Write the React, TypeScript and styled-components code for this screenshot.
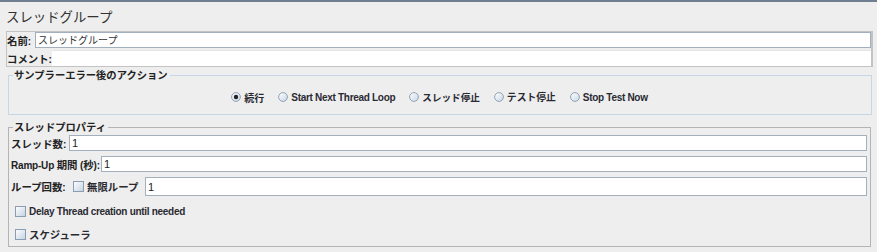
import React from 'react';
import styled, { createGlobalStyle } from 'styled-components';

const GlobalStyle = createGlobalStyle`
  html, body { margin: 0; padding: 0; background: #eeeeee; }
  body { width: 877px; height: 252px; overflow: hidden; }
`;

const FONT = `"Liberation Sans", "Noto Sans CJK JP", sans-serif`;
const JA = `"Noto Sans CJK JP", sans-serif`;

//region:Styled Components
const Page = styled.div`
  box-sizing: border-box;
  width: 877px;
  height: 252px;
  border-top: 2px solid #6f7f90;
  padding: 0 4px 0 6px;
  font-family: ${FONT};
  color: #222;
`;
const Title = styled.div`
  font-family: ${JA};
  font-size: 13.4px;
  line-height: 29px;
  color: #333;
`;
const NameBox = styled.div`
  box-sizing: border-box;
  border: 1px solid #c3c3c3;
  border-right-width: 2px;
  display: flex;
  flex-direction: column;
`;
const Row = styled.div<{ $h?: number; $indent?: number }>`
  display: flex;
  align-items: center;
  height: ${p => p.$h ?? 16}px;
  padding-left: ${p => p.$indent ?? 0}px;
`;
const Label = styled.span<{ $w: number }>`
  box-sizing: border-box;
  width: ${p => p.$w}px;
  flex: none;
  font-weight: bold;
  font-size: 10px;
  letter-spacing: -0.2px;
  white-space: nowrap;
  color: #222;
`;
const Ja = styled.span<{ $size?: number }>`
  font-family: ${JA};
  font-size: ${p => p.$size ?? 10.4}px;
  letter-spacing: 0;
`;
const Field = styled.div<{ $flat?: boolean }>`
  flex: 1;
  box-sizing: border-box;
  height: 100%;
  background: #fff;
  border: 1px solid ${p => (p.$flat ? '#ffffff' : '#a2afbc')};
  border-top: 1px solid ${p => (p.$flat ? '#e4e4e4' : '#a2afbc')};
  font-size: 11px;
  line-height: 14px;
  padding-left: 2px;
  color: #222;
  display: flex;
  align-items: center;
  white-space: nowrap;
`;
const FieldText = styled.span`
  font-family: ${JA};
  font-size: 10px;
  color: #333;
`;
const Group = styled.fieldset<{ $blue?: boolean; $right?: number }>`
  margin: 0 ${p => p.$right ?? 1}px 0 2px;
  padding: 0 3px 0 2px;
  border: 1px solid ${p => (p.$blue ? '#c6d6e6' : '#b4b4b4')};
  min-width: 0;
`;
const Legend = styled.legend`
  font-family: ${JA};
  font-size: 10.3px;
  font-weight: bold;
  line-height: 14px;
  padding: 0 2px 0 1px;
  margin-left: 2px;
  color: #222;
`;
const RadioRow = styled.div`
  display: flex;
  justify-content: center;
  align-items: center;
  gap: 14px;
  height: 16px;
  margin: 7px 0 9px;
`;
const Choice = styled.label`
  display: flex;
  align-items: center;
  gap: 3px;
  font-size: 10px;
  letter-spacing: -0.3px;
  font-weight: bold;
  white-space: nowrap;
  color: #2a2a33;
`;
const Stack = styled.div`
  display: flex;
  flex-direction: column;
  padding: 1px 0 3px;
`;
const Gap = styled.div<{ $h: number }>`
  height: ${p => p.$h}px;
  flex: none;
`;
const CheckBox = styled.svg`
  flex: none;
`;
const CheckLabel = styled.span<{ $w?: number }>`
  font-size: 10px;
  letter-spacing: -0.3px;
  font-weight: bold;
  margin-left: 3px;
  white-space: nowrap;
  color: #2a2a33;
  ${p => (p.$w ? `width: ${p.$w}px; flex: none;` : '')}
`;
//endregion

const Radio = ({ on }: { on?: boolean }) => (
  <svg width="10" height="10" viewBox="0 0 10 10">
    <defs>
      <linearGradient id="rg" x1="0" y1="0" x2="1" y2="1">
        <stop offset="0" stopColor="#ffffff" />
        <stop offset="1" stopColor="#c9d6e4" />
      </linearGradient>
    </defs>
    <circle cx="5" cy="5" r="4.4" fill="url(#rg)" stroke="#8fa2b6" strokeWidth="1" />
    {on && <circle cx="5" cy="5" r="2.2" fill="#222" />}
  </svg>
);

const Check = () => (
  <CheckBox width="11" height="11" viewBox="0 0 11 11">
    <defs>
      <linearGradient id="cg" x1="0" y1="0" x2="1" y2="1">
        <stop offset="0" stopColor="#ffffff" />
        <stop offset="1" stopColor="#c3d2e2" />
      </linearGradient>
    </defs>
    <rect x="0.5" y="0.5" width="10" height="10" fill="url(#cg)" stroke="#8a9db2" />
  </CheckBox>
);

export default function App() {
  return (
    <Page>
      <GlobalStyle />
      <Title>スレッドグループ</Title>
      <NameBox>
        <Row>
          <Label $w={28}><Ja>名前</Ja>:</Label>
          <Field>
            <FieldText>スレッドグループ</FieldText>
          </Field>
        </Row>
        <Gap $h={2} />
        <Row>
          <Label $w={45}><Ja>コメント</Ja>:</Label>
          <Field $flat />
        </Row>
      </NameBox>
      <Gap $h={1} />
      <Group $blue $right={1}>
        <Legend>サンプラーエラー後のアクション</Legend>
        <RadioRow>
          <Choice><Radio on /><Ja $size={10}>続行</Ja></Choice>
          <Choice><Radio />Start Next Thread Loop</Choice>
          <Choice><Radio /><Ja $size={9.6}>スレッド停止</Ja></Choice>
          <Choice><Radio /><Ja $size={9.8}>テスト停止</Ja></Choice>
          <Choice><Radio />Stop Test Now</Choice>
        </RadioRow>
      </Group>
      <Gap $h={5} />
      <Group $right={2}>
        <Legend>スレッドプロパティ</Legend>
        <Stack>
          <Row>
            <Label $w={58}><Ja>スレッド数</Ja>:</Label>
            <Field>1</Field>
          </Row>
          <Gap $h={5} />
          <Row>
            <Label $w={90}>Ramp-Up <Ja>期間</Ja> (<Ja>秒</Ja>):</Label>
            <Field>1</Field>
          </Row>
          <Gap $h={5} />
          <Row $h={19}>
            <Label $w={62}><Ja>ループ回数</Ja>:</Label>
            <Check />
            <CheckLabel $w={58}><Ja>無限ループ</Ja></CheckLabel>
            <Field>1</Field>
          </Row>
          <Gap $h={7} />
          <Row $h={17} $indent={4}>
            <Check />
            <CheckLabel>Delay Thread creation until needed</CheckLabel>
          </Row>
          <Gap $h={6} />
          <Row $h={17} $indent={4}>
            <Check />
            <CheckLabel><Ja>スケジューラ</Ja></CheckLabel>
          </Row>
        </Stack>
      </Group>
    </Page>
  );
}
